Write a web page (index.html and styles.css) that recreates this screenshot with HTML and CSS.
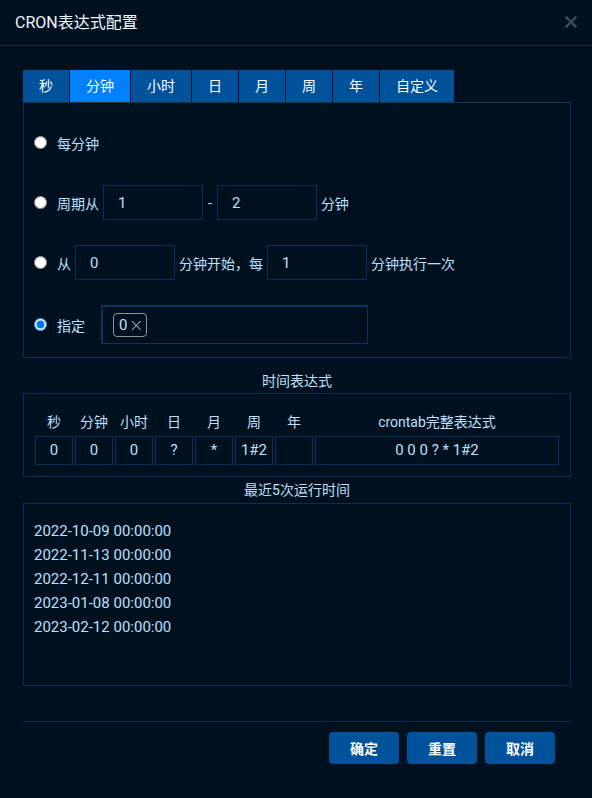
FILE: index.html
```html
<!DOCTYPE html>
<html lang="zh-CN">
<head>
  <meta charset="UTF-8" />
  <title>CRON表达式配置</title>
  <link rel="stylesheet" href="styles.css">
</head>
<body>
  <div class="dialog">
    <div class="dialog-header">
      <span class="dialog-title">CRON表达式配置</span>
      <span class="dialog-close">
        <svg width="12" height="12" viewBox="0 0 12 12"><path d="M1.5 1.5 L10.5 10.5 M10.5 1.5 L1.5 10.5" stroke="#3a4958" stroke-width="2.6" stroke-linecap="square"/></svg>
      </span>
    </div>

    <div class="dialog-body">
      <div class="tabs">
        <div class="tab">秒</div>
        <div class="tab active">分钟</div>
        <div class="tab">小时</div>
        <div class="tab">日</div>
        <div class="tab">月</div>
        <div class="tab">周</div>
        <div class="tab">年</div>
        <div class="tab">自定义</div>
      </div>

      <div class="tab-panel">
        <label class="row">
          <input type="radio" name="type" />
          <span>每分钟</span>
        </label>
        <label class="row">
          <input type="radio" name="type" />
          <span>周期从</span>
          <input class="num" type="text" value="1" />
          <span class="dash">-</span>
          <input class="num" type="text" value="2" />
          <span>分钟</span>
        </label>
        <label class="row">
          <input type="radio" name="type" />
          <span>从</span>
          <input class="num" type="text" value="0" />
          <span>分钟开始，每</span>
          <input class="num" type="text" value="1" />
          <span>分钟执行一次</span>
        </label>
        <label class="row row-select">
          <input type="radio" name="type" checked />
          <span>指定</span>
          <div class="multi-select">
            <span class="tag">0
              <svg width="11" height="11" viewBox="0 0 11 11"><path d="M1 1 L10 10 M10 1 L1 10" stroke="#9aa3ab" stroke-width="1.1"/></svg>
            </span>
          </div>
        </label>
      </div>

      <div class="section-title">时间表达式</div>
      <div class="expr-box">
        <div class="expr-grid">
          <div class="head">秒</div>
          <div class="head">分钟</div>
          <div class="head">小时</div>
          <div class="head">日</div>
          <div class="head">月</div>
          <div class="head">周</div>
          <div class="head">年</div>
          <div class="head">crontab完整表达式</div>
          <div class="cell">0</div>
          <div class="cell">0</div>
          <div class="cell">0</div>
          <div class="cell">?</div>
          <div class="cell">*</div>
          <div class="cell">1#2</div>
          <div class="cell"></div>
          <div class="cell">0 0 0 ? * 1#2</div>
        </div>
      </div>

      <div class="section-title second">最近5次运行时间</div>
      <div class="result-box">
        <div>2022-10-09 00:00:00</div>
        <div>2022-11-13 00:00:00</div>
        <div>2022-12-11 00:00:00</div>
        <div>2023-01-08 00:00:00</div>
        <div>2023-02-12 00:00:00</div>
      </div>
    </div>

    <div class="dialog-footer">
      <button>确定</button>
      <button>重置</button>
      <button>取消</button>
    </div>
  </div>
</body>
</html>
```

FILE: styles.css
```css
:root {
  --bg: #00101e;
  --line: #0c2f55;
  --text: #bde0ff;
  --tab: #00529b;
  --tab-active: #0080ff;
}

body {
  margin: 0;
  background: var(--bg);
  color: var(--text);
  font-family: Roboto, "Noto Sans CJK SC", sans-serif;
  font-size: 14px;
}

.dialog {
  width: 592px;
  min-height: 798px;
}

.dialog-header {
  height: 45px;
  padding: 0 15px;
  display: flex;
  align-items: center;
  justify-content: space-between;
  border-bottom: 1px solid #0d2c4b;
}

.dialog-title {
  font-size: 16px;
  color: #eef6ff;
  margin-top: -4px;
}

.dialog-close {
  display: flex;
  margin-top: -2px;
}

.dialog-body {
  padding: 24px 21px 0 23px;
}

.tabs {
  display: flex;
  height: 32px;
}

.tab {
  padding: 0 16px;
  margin-right: 1px;
  background: var(--tab);
  color: #fff;
  line-height: 32px;
}

.tab.active {
  background: var(--tab-active);
}

.tab-panel {
  border: 1px solid var(--line);
  border-top-color: #22364a;
  padding: 22px 10px 13px;
  display: flex;
  flex-direction: column;
  gap: 25px;
}

.row {
  display: flex;
  align-items: center;
  height: 35px;
  gap: 4px;
}

.row input[type="radio"] {
  width: 13px;
  height: 13px;
  margin: 0 6px 0 0;
}

.row .dash {
  margin: 0 1px;
}

.num {
  width: 100px;
  height: 35px;
  box-sizing: border-box;
  background: transparent;
  border: 1px solid var(--line);
  color: var(--text);
  font-family: inherit;
  font-size: 15px;
  padding: 0 14px;
  outline: none;
}

.row-select {
  height: 39px;
}

.multi-select {
  margin-left: 12px;
  width: 267px;
  height: 39px;
  box-sizing: border-box;
  border: 1px solid #0b3460;
  border-width: 2px 1px 1px 2px;
  padding-left: 10px;
  display: flex;
  align-items: center;
}

.tag {
  display: flex;
  align-items: center;
  gap: 4px;
  width: 34px;
  height: 24px;
  box-sizing: border-box;
  padding: 0 4px 0 5px;
  border: 1px solid #8b949c;
  border-radius: 4px;
  font-size: 15px;
}

.section-title {
  margin-top: 12px;
  line-height: 23px;
  text-align: center;
}

.section-title.second {
  margin-top: 0;
  line-height: 26px;
}

.expr-box {
  border: 1px solid var(--line);
  padding: 16px 11px 11px;
}

.expr-grid {
  display: grid;
  grid-template-columns: repeat(7, 38px) 244px;
  grid-template-rows: 24px 29px;
  gap: 2px;
}

.expr-grid .head {
  text-align: center;
  line-height: 24px;
}

.expr-grid .cell {
  border: 1px solid var(--line);
  text-align: center;
  line-height: 27px;
  font-size: 15px;
}

.result-box {
  height: 183px;
  box-sizing: border-box;
  border: 1px solid var(--line);
  padding: 15px 10px;
  font-size: 15px;
  line-height: 24px;
}

.dialog-footer {
  margin: 35px 21px 0 23px;
  border-top: 1px solid #0d2c4b;
  padding: 10px 16px 0 0;
  display: flex;
  justify-content: flex-end;
  gap: 8px;
}

.dialog-footer button {
  width: 70px;
  height: 32px;
  border: none;
  border-radius: 4px;
  background: var(--tab);
  color: #fff;
  font-family: inherit;
  font-size: 14px;
  font-weight: 600;
  cursor: pointer;
}
```
